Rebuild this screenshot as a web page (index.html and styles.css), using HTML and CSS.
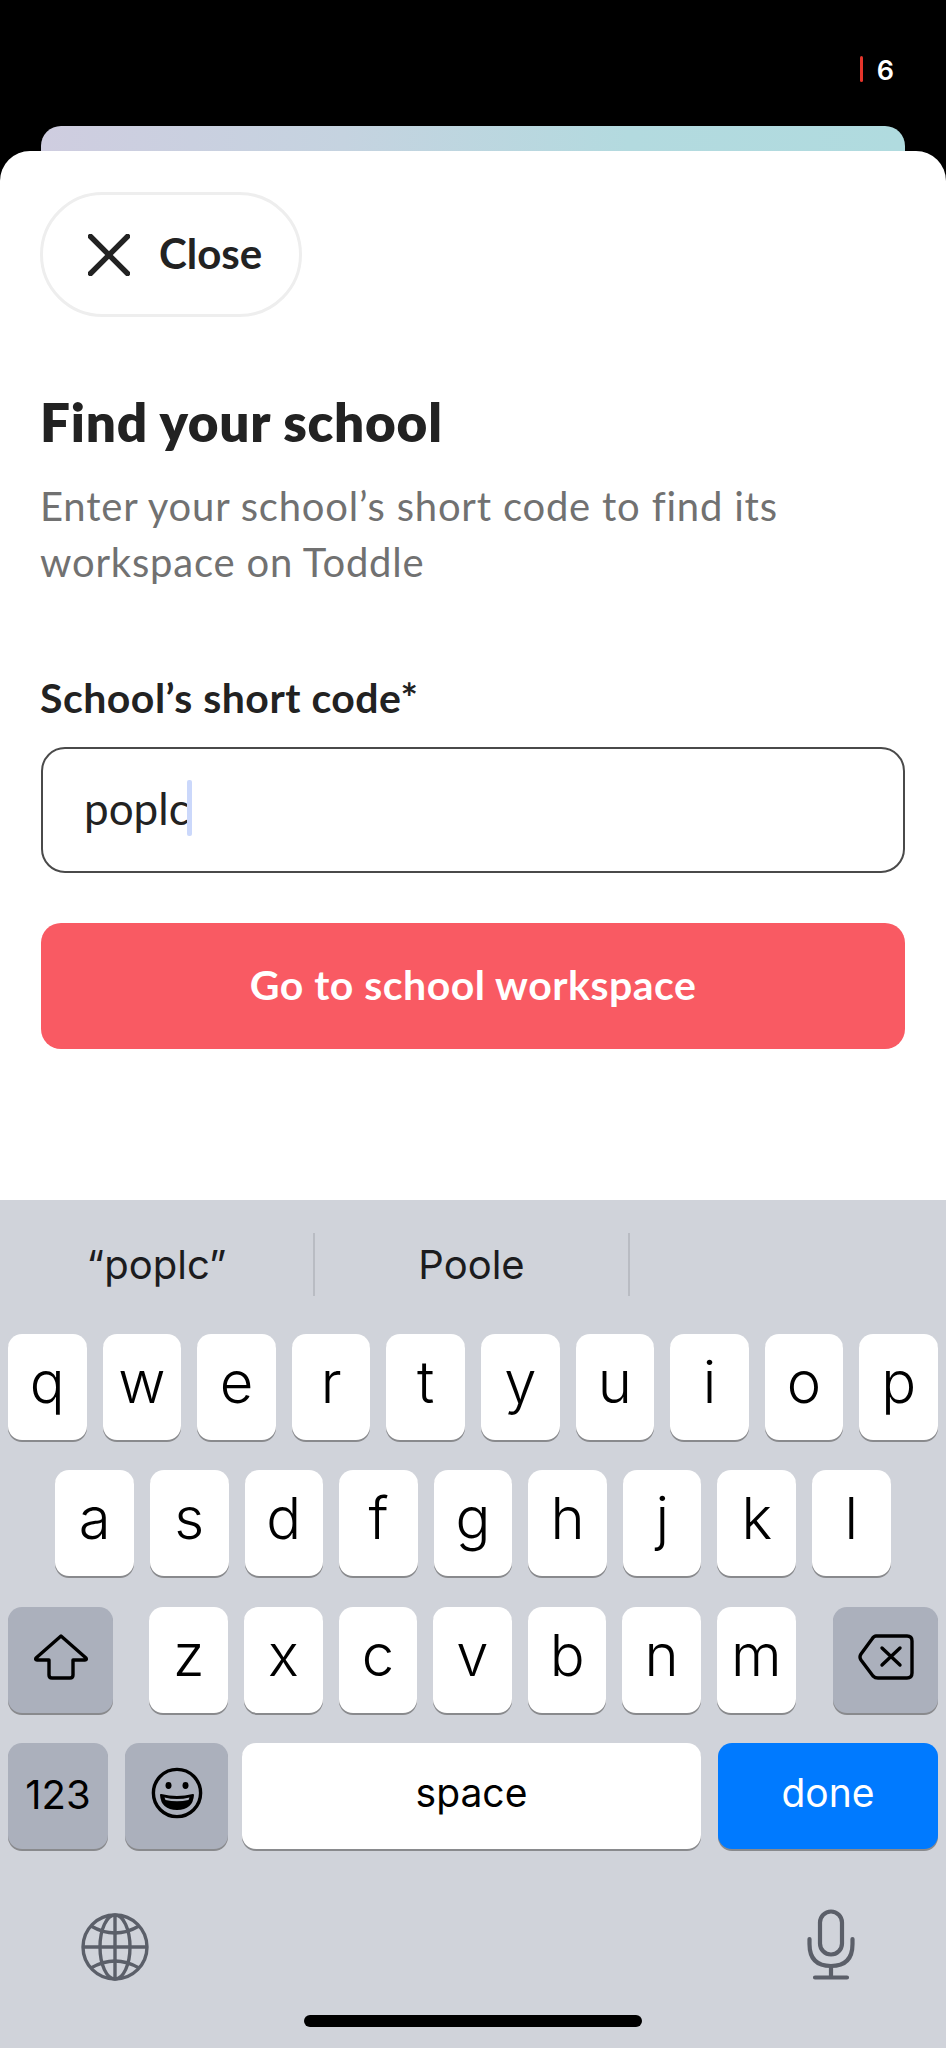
FILE: index.html
```html
<!DOCTYPE html>
<html lang="en">
<head>
    <meta charset="UTF-8">
    <meta name="viewport" content="width=device-width, initial-scale=1.0">
    <title>Find your school</title>
    <link rel="stylesheet" href="styles.css">
</head>
<body>
    <div class="status-area">
        <div class="status-count"><span class="status-tick"></span><span class="status-num">6</span></div>
        <div class="peek-card"></div>
    </div>

    <main class="sheet">
        <button class="close-btn" type="button">
            <svg class="close-icon" viewBox="0 0 42 42" width="42" height="42">
                <path d="M2.5 2.5 L39.5 39.5 M39.5 2.5 L2.5 39.5" fill="none" stroke="#222" stroke-width="5.4" stroke-linecap="round"/>
            </svg>
            <span class="close-text">Close</span>
        </button>

        <h1 class="title">Find your school</h1>
        <p class="subtitle">Enter your school’s short code to find its<br>workspace on Toddle</p>

        <label class="field-label">School’s short code*</label>
        <div class="field-input"><span>poplc</span><span class="caret"></span></div>

        <button class="submit-btn" type="button">Go to school workspace</button>
    </main>

    <section class="keyboard">
        <div class="suggestions">
            <div class="suggestion">“poplc”</div>
            <div class="suggestion">Poole</div>
            <div class="suggestion"></div>
        </div>

        <div class="key-rows">
            <div class="key-row">
                <div class="key">q</div><div class="key">w</div><div class="key">e</div><div class="key">r</div><div class="key">t</div>
                <div class="key">y</div><div class="key">u</div><div class="key">i</div><div class="key">o</div><div class="key">p</div>
            </div>
            <div class="key-row key-row-center">
                <div class="key">a</div><div class="key">s</div><div class="key">d</div><div class="key">f</div><div class="key">g</div>
                <div class="key">h</div><div class="key">j</div><div class="key">k</div><div class="key">l</div>
            </div>
            <div class="key-row key-row-split">
                <div class="key key-dark key-side">
                    <svg viewBox="0 0 54 46" width="54" height="46">
                        <path d="M27 2 L52 24 Q53 26 51 26 H39 V41 Q39 44 36 44 H18 Q15 44 15 41 V26 H3 Q1 26 2 24 Z" fill="none" stroke="#000" stroke-width="3.4" stroke-linejoin="round"/>
                    </svg>
                </div>
                <div class="key-group">
                    <div class="key">z</div><div class="key">x</div><div class="key">c</div><div class="key">v</div>
                    <div class="key">b</div><div class="key">n</div><div class="key">m</div>
                </div>
                <div class="key key-dark key-side">
                    <svg viewBox="0 0 56 46" width="56" height="46">
                        <path d="M18 2 H49 Q54 2 54 7 V39 Q54 44 49 44 H20 Q17 44 15 42 L3 26 Q1 23 3 20 L14 5 Q16 2 18 2 Z" fill="none" stroke="#000" stroke-width="3.4" stroke-linejoin="round"/>
                        <path d="M24 14 L42 31 M42 14 L24 31" fill="none" stroke="#000" stroke-width="3.4" stroke-linecap="round"/>
                    </svg>
                </div>
            </div>
            <div class="key-row key-row-bottom">
                <div class="key key-dark key-num">123</div>
                <div class="key key-dark key-emoji">
                    <svg viewBox="0 0 52 52" width="52" height="52">
                        <circle cx="26" cy="26" r="23.6" fill="none" stroke="#000" stroke-width="3.4"/>
                        <ellipse cx="17.5" cy="18.5" rx="3" ry="3.4" fill="#000"/>
                        <ellipse cx="34.5" cy="18.5" rx="3" ry="3.4" fill="#000"/>
                        <path d="M10 28 Q26 32 42 28 Q41 42 26 42 Q11 42 10 28 Z" fill="#000" stroke="#000" stroke-width="2" stroke-linejoin="round"/>
                        <path d="M13.5 30.5 Q26 33.5 38.5 30.5 L37.5 33 Q26 35.5 14.5 33 Z" fill="#abb0bc"/>
                    </svg>
                </div>
                <div class="key key-space">space</div>
                <div class="key key-done">done</div>
            </div>
        </div>

        <div class="kb-footer">
            <svg class="globe-icon" viewBox="0 0 68 68" width="68" height="68">
                <g fill="none" stroke="#5b5f69" stroke-width="3.4">
                    <circle cx="34" cy="34" r="32"/>
                    <ellipse cx="34" cy="34" rx="15" ry="32"/>
                    <path d="M34 2 V66 M2 34 H66"/>
                    <path d="M10 13 Q34 27 58 13 M10 55 Q34 41 58 55"/>
                </g>
            </svg>
            <svg class="mic-icon" viewBox="0 0 48 71" width="48" height="71">
                <g fill="none" stroke="#5b5f69" stroke-width="4.2" stroke-linecap="round">
                    <rect x="13" y="2.5" width="22" height="43" rx="11"/>
                    <path d="M2.5 30 V35 Q2.5 57 24 57 Q45.5 57 45.5 35 V30"/>
                    <path d="M24 57 V68 M8 68.5 H40"/>
                </g>
            </svg>
        </div>
        <div class="home-bar"></div>
    </section>
</body>
</html>
```

FILE: styles.css
```css
* {
    box-sizing: border-box;
}
body {
    margin: 0;
    width: 946px;
    height: 2048px;
    overflow: hidden;
    background: #000;
    font-family: Lato, "Open Sans", sans-serif;
    color: #222;
}

/* top black strip with the card peeking out */
.status-area {
    height: 151px;
    padding: 56px 41px 0;
    display: flex;
    flex-direction: column;
}
.status-count {
    height: 70px;
    display: flex;
    justify-content: flex-end;
    align-items: flex-start;
    padding-right: 11px;
}
.status-tick {
    width: 3px;
    height: 26px;
    background: #e5352b;
    border-radius: 2px;
    margin-right: 14px;
}
.status-num {
    color: #fff;
    font-family: Inter, sans-serif;
    font-weight: 600;
    font-size: 27px;
    line-height: 27px;
    padding-top: 1px;
}
.peek-card {
    height: 25px;
    border-radius: 20px 20px 0 0;
    background: linear-gradient(90deg, #cfcde0 0%, #c5d3e0 35%, #b3dadf 68%, #b0dbdf 100%);
}

.sheet {
    height: 1049px;
    padding: 41px 40px 0;
    background: #fff;
    border-radius: 30px 30px 0 0;
}
.close-btn {
    width: 262px;
    height: 125px;
    padding: 0 0 0 45px;
    display: flex;
    align-items: center;
    gap: 29px;
    background: #fff;
    border: 3px solid #eee;
    border-radius: 63px;
    font-family: inherit;
    font-size: 42px;
    font-weight: 700;
    color: #222;
}
.close-icon {
    flex: none;
}
.close-text {
    margin-bottom: 4px;
}
.title {
    margin: 69px 0 0;
    font-size: 53px;
    line-height: 72px;
    font-weight: 800;
    letter-spacing: 0.75px;
    color: #222;
}
.subtitle {
    margin: 20px 0 0;
    font-size: 40px;
    line-height: 56px;
    letter-spacing: 0.8px;
    color: #717171;
}
.field-label {
    display: block;
    margin-top: 80px;
    font-size: 41px;
    line-height: 56px;
    font-weight: 700;
    letter-spacing: 0.5px;
    color: #222;
}
.field-input {
    margin: 21px 1px 0;
    height: 126px;
    padding: 0 0 4px 41px;
    display: flex;
    align-items: center;
    border: 2px solid #4a4a4a;
    border-radius: 24px;
    font-size: 44px;
    color: #222;
}
.caret {
    width: 5px;
    height: 56px;
    margin-left: -3px;
    background: #cbd8fb;
    border-radius: 2px;
}
.submit-btn {
    display: block;
    width: 864px;
    height: 126px;
    margin: 50px 1px 0;
    padding: 0 0 4px;
    border: none;
    border-radius: 20px;
    background: #f95a63;
    color: #fff;
    font-family: inherit;
    font-size: 41px;
    font-weight: 700;
    letter-spacing: 0.5px;
}

/* keyboard */
.keyboard {
    height: 848px;
    background: #d0d3da;
    font-family: Inter, sans-serif;
    color: #000;
}
.suggestions {
    height: 134px;
    padding-top: 33px;
    display: flex;
    align-items: flex-start;
}
.suggestion {
    width: 315px;
    height: 63px;
    display: flex;
    align-items: center;
    justify-content: center;
    border-right: 2px solid #b9bcc3;
    font-size: 40px;
    color: #1c1c1e;
}
.suggestion:last-child {
    border-right: none;
}
.key-rows {
    padding: 0 8px;
    display: flex;
    flex-direction: column;
    gap: 30.4px;
}
.key-row {
    display: flex;
    gap: 16px;
}
.key-row-center {
    justify-content: center;
}
.key-row-split {
    justify-content: space-between;
}
.key-row-bottom {
    gap: 14px;
}
.key-group {
    display: flex;
    gap: 16px;
    margin-left: -1px;
}
.key {
    width: 78.6px;
    height: 106px;
    flex: none;
    display: flex;
    align-items: center;
    justify-content: center;
    padding-bottom: 10px;
    background: #fff;
    border-radius: 14px;
    box-shadow: 0 2px 0 #898a8d;
    font-size: 58px;
    font-weight: 350;
    line-height: 1;
}
.key-dark {
    background: #abb0bc;
}
.key-side {
    width: 105px;
    padding-bottom: 6px;
}
.key-num {
    width: 100px;
    padding-bottom: 2px;
    font-size: 40px;
    font-weight: 400;
}
.key-emoji {
    width: 103px;
    margin-left: 3px;
    padding-bottom: 6px;
}
.key-space {
    width: 459px;
    padding-bottom: 8px;
    font-size: 39px;
    font-weight: 400;
}
.key-done {
    width: 220px;
    margin-left: 3px;
    padding-bottom: 8px;
    background: #007aff;
    color: #fff;
    font-size: 39px;
    font-weight: 400;
}
.kb-footer {
    margin-top: 60px;
    height: 71px;
    padding: 0 91px 0 81px;
    display: flex;
    justify-content: space-between;
    align-items: flex-start;
}
.globe-icon {
    margin-top: 4px;
}
.home-bar {
    width: 338px;
    height: 12px;
    margin: 35px auto 0;
    background: #000;
    border-radius: 6px;
}
```
